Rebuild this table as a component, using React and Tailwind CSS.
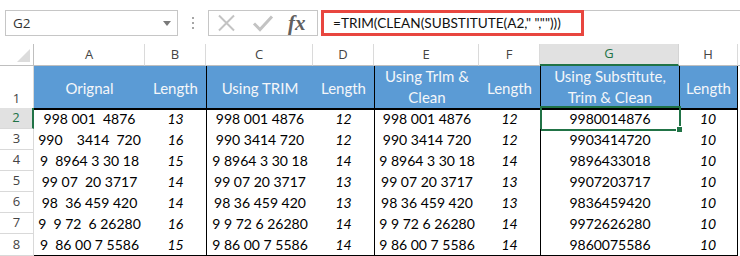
import React from 'react';

const grid = 'grid grid-cols-[34px_111px_61px_107px_61px_105px_61px_139px_59px_2px]';
const cellFont = { fontFamily: 'Lato, "Open Sans", sans-serif' };

const rows = [
  ['998 001  4876', 13, '998 001 4876', 12, '998 001 4876', 12, '9980014876', 10],
  ['990    3414  720', 16, '990 3414 720', 12, '990 3414 720', 12, '9903414720', 10],
  ['9  8964 3 30 18', 15, '9 8964 3 30 18', 14, '9 8964 3 30 18', 14, '9896433018', 10],
  ['99 07  20 3717', 14, '99 07 20 3717', 13, '99 07 20 3717', 13, '9907203717', 10],
  ['98  36 459 420', 14, '98 36 459 420', 13, '98 36 459 420', 13, '9836459420', 10],
  ['9  9 72  6 26280', 16, '9 9 72 6 26280', 14, '9 9 72 6 26280', 14, '9972626280', 10],
  ['9  86 00 7 5586', 15, '9 86 00 7 5586', 14, '9 86 00 7 5586', 14, '9860075586', 10],
];

// black box lines sit on the left of C, E and G
const leftLine = [false, false, true, false, true, false, true, false];

const FormulaBar = () => (
  <div className="flex h-[44px] items-start pt-[10px]" style={{ fontFamily: '"Open Sans", sans-serif' }}>
    <div className="ml-[5px] flex h-[26px] w-[173px] items-center justify-between border border-[#c6c6c6] pl-[7px] pr-[6px]">
      <span className="text-[13.5px] text-[#333]">G2</span>
      <svg width="8" height="5" viewBox="0 0 8 5"><path d="M0 0h8L4 5z" fill="#7a7a7a" /></svg>
    </div>
    <div className="flex h-[26px] w-[30px] flex-col items-center justify-center gap-[3px]">
      <span className="h-[2px] w-[2px] bg-[#a6a6a6]" />
      <span className="h-[2px] w-[2px] bg-[#a6a6a6]" />
      <span className="h-[2px] w-[2px] bg-[#a6a6a6]" />
    </div>
    <div className="flex h-[26px] w-[110px] items-center border border-[#c6c6c6]">
      <svg className="ml-[8px]" width="20" height="18" viewBox="0 0 20 18">
        <path d="M2 1.5l15 15M17 1.5l-15 15" stroke="#c3c3c3" strokeWidth="2" fill="none" />
      </svg>
      <svg className="ml-[15px]" width="22" height="18" viewBox="0 0 22 18">
        <path d="M2 9.5l6 6 12-13" stroke="#c3c3c3" strokeWidth="3" fill="none" />
      </svg>
      <span className="ml-[14px] text-[21px] font-bold italic leading-none text-[#606060]" style={{ fontFamily: '"Liberation Serif", serif' }}>
        fx
      </span>
    </div>
    <div className="ml-[3px] flex h-[26px] flex-1 border-t border-[#c6c6c6]">
      <div className="-mt-px flex h-[26px] w-[263px] items-center border-[3px] border-[#e8463f] pl-[9px]">
        <span className="whitespace-pre text-[13.6px] text-[#111]" style={cellFont}>
          =TRIM(CLEAN(SUBSTITUTE(A2," ","")))
        </span>
      </div>
    </div>
  </div>
);

const ColumnHeaders = () => (
  <div className={`${grid} h-[22px] text-[13px] text-[#444]`} style={{ fontFamily: '"Open Sans", sans-serif' }}>
    <div className="flex items-end justify-end border-r border-b border-[#bfbfbf] pb-[3px] pr-[3px]">
      <svg width="13" height="13" viewBox="0 0 13 13"><path d="M13 0v13H0z" fill="#dcdcdc" /></svg>
    </div>
    {['A', 'B', 'C', 'D', 'E', 'F', 'G', 'H'].map((c) =>
      c === 'G' ? (
        <div key={c} className="flex items-center justify-center border-r border-b-2 border-r-[#d4d4d4] border-b-[#217346] bg-[#e1e1e1] text-[#217346]">
          {c}
        </div>
      ) : (
        <div key={c} className="flex items-center justify-center border-r border-b border-r-[#dadada] border-b-[#bfbfbf]">
          {c}
        </div>
      )
    )}
    <div className="border-b border-[#bfbfbf]" />
  </div>
);

const TitleRow = () => {
  const titles = [
    ['Orignal'],
    ['Length'],
    ['Using TRIM'],
    ['Length'],
    ['Using TrIm &', 'Clean'],
    ['Length'],
    ['Using Substitute,', 'Trim & Clean'],
    ['Length'],
  ];
  return (
    <div className={`${grid} h-[42px]`}>
      <div className="flex items-end justify-center border-r border-b border-[#d9d9d9] pb-[1px] text-[13px] text-[#444]" style={{ fontFamily: '"Open Sans", sans-serif' }}>
        1
      </div>
      {titles.map((t, i) => (
        <div
          key={i}
          className={`flex flex-col items-center justify-center border-b-2 border-black bg-[#5b9bd5] text-[15px] leading-[21px] text-[#f4f6f9] ${
            leftLine[i] ? 'border-l' : ''
          } ${i === 7 ? 'border-l border-r' : ''} ${t.length === 1 ? 'pt-[3px]' : ''}`}
          style={cellFont}
        >
          {t.map((line) => (
            <span key={line} className="whitespace-nowrap">{line}</span>
          ))}
        </div>
      ))}
      <div />
    </div>
  );
};

const DataRow = ({ row, n, last }) => (
  <div className={`${grid} h-[21px]`}>
    {n === 2 ? (
      <div className="flex items-center justify-center border-r-2 border-b border-r-[#217346] border-b-[#d9d9d9] bg-[#e1e1e1] text-[13px] text-[#217346]" style={{ fontFamily: '"Open Sans", sans-serif' }}>
        {n}
      </div>
    ) : (
      <div className="flex items-center justify-center border-r border-b border-[#d9d9d9] text-[13px] text-[#444]" style={{ fontFamily: '"Open Sans", sans-serif' }}>
        {n}
      </div>
    )}
    {row.map((v, i) => (
      <div
        key={i}
        className={`relative flex items-center justify-center whitespace-pre text-[14px] text-black ${i % 2 === 1 ? 'italic' : ''} ${
          leftLine[i] ? 'border-l border-black' : ''
        } ${i === 7 ? 'border-r border-black' : ''} ${last ? 'border-b border-black' : ''}`}
        style={cellFont}
      >
        {v}
        {n === 2 && i === 6 && (
          <>
            <div className="absolute -left-[1px] -top-[2px] h-[25px] w-[141px] border-2 border-[#217346]" />
            <div className="absolute left-[136px] top-[19px] h-[5px] w-[5px] bg-[#217346] outline outline-1 outline-white" />
          </>
        )}
      </div>
    ))}
    <div />
  </div>
);

export default function App() {
  return (
    <div className="h-[256px] w-[740px] overflow-hidden bg-white">
      <FormulaBar />
      <ColumnHeaders />
      <TitleRow />
      {rows.map((r, i) => (
        <DataRow key={i} row={r} n={i + 2} last={i === rows.length - 1} />
      ))}
    </div>
  );
}
